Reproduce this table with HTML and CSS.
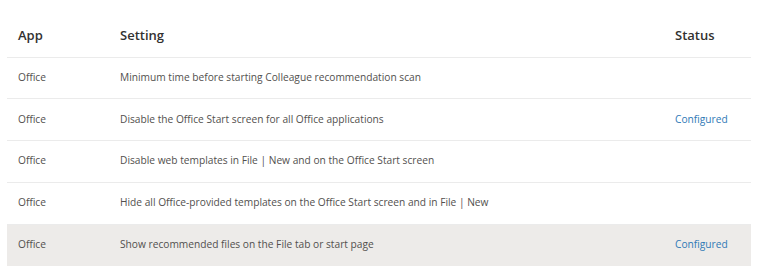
FILE: index.html
```html
<!DOCTYPE html>
<html>
<head>
<meta charset="utf-8">
<link rel="stylesheet" href="styles.css">
</head>
<body>
<table class="grid">
  <colgroup>
    <col class="c-app">
    <col class="c-setting">
    <col class="c-status">
  </colgroup>
  <thead>
    <tr class="head">
      <th>App</th>
      <th>Setting</th>
      <th>Status</th>
    </tr>
  </thead>
  <tbody>
    <tr><td>Office</td><td>Minimum time before starting Colleague recommendation scan</td><td></td></tr>
    <tr><td>Office</td><td>Disable the Office Start screen for all Office applications</td><td class="ok">Configured</td></tr>
    <tr><td>Office</td><td>Disable web templates in File | New and on the Office Start screen</td><td></td></tr>
    <tr><td>Office</td><td>Hide all Office-provided templates on the Office Start screen and in File | New</td><td></td></tr>
    <tr class="sel"><td>Office</td><td>Show recommended files on the File tab or start page</td><td class="ok">Configured</td></tr>
  </tbody>
</table>
</body>
</html>
```
FILE: styles.css
```css
html, body {
  margin: 0;
  padding: 0;
  background: #ffffff;
}
body {
  padding: 0 17px 0 7px;
  font-family: "Open Sans", "Noto Sans", sans-serif;
}
.grid {
  width: 744px;
  border-collapse: collapse;
  table-layout: fixed;
}
.c-app { width: 102px; }
.c-setting { width: 555px; }
.c-status { width: 87px; }
.grid th {
  text-align: left;
  font-weight: 600;
  font-size: 13px;
  color: #323130;
  height: 57px;
  padding: 14px 0 0 11px;
  box-sizing: border-box;
  vertical-align: middle;
  border-bottom: 1px solid #ebebeb;
}
.grid td {
  font-size: 10.2px;
  color: #52504e;
  height: 41.8px;
  padding: 0 0 2px 11px;
  box-sizing: border-box;
  border-bottom: 1px solid #ebebeb;
  white-space: nowrap;
}
.grid tr.sel td {
  background: #edebe9;
  border-bottom: none;
}
.grid td.ok {
  color: #2f79b6;
}
```
